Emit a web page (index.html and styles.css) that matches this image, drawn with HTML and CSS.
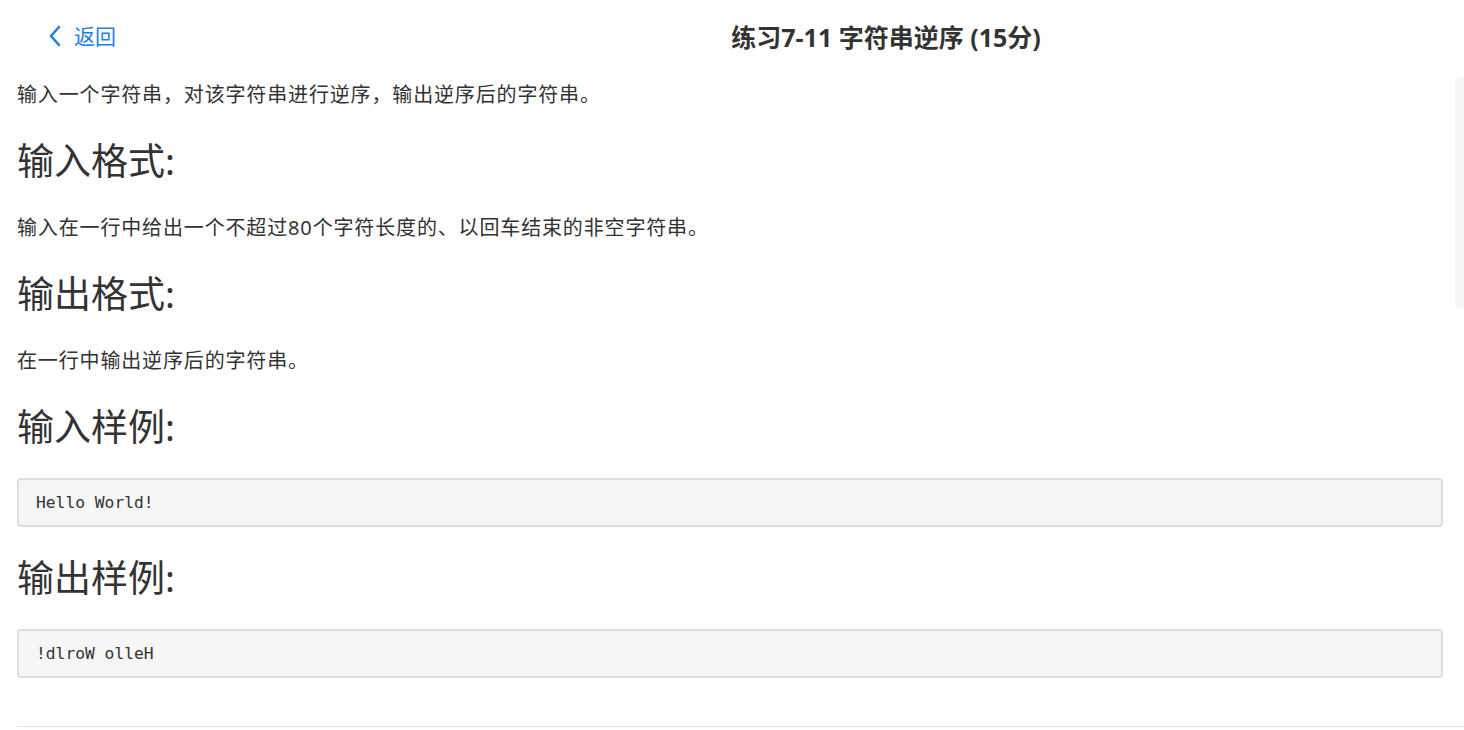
FILE: index.html
```html
<!DOCTYPE html>
<html lang="zh-CN">
<head>
<meta charset="utf-8">
<title>练习7-11 字符串逆序 (15分)</title>
<link rel="stylesheet" href="styles.css">
</head>
<body>
<div class="page">
  <header class="topbar">
    <a class="back" href="#">
      <svg class="chev" width="14" height="22" viewBox="0 0 14 22"><path d="M11 2 L3 11 L11 20" fill="none" stroke="#1f7ee8" stroke-width="2.6" stroke-linecap="round" stroke-linejoin="round"/></svg>
      <span>返回</span>
    </a>
    <h1 class="title">练习7-11 字符串逆序 (15分)</h1>
  </header>
  <main class="content">
    <p>输入一个字符串，对该字符串进行逆序，输出逆序后的字符串。</p>
    <h2>输入格式:</h2>
    <p>输入在一行中给出一个不超过80个字符长度的、以回车结束的非空字符串。</p>
    <h2>输出格式:</h2>
    <p>在一行中输出逆序后的字符串。</p>
    <h2>输入样例:</h2>
    <pre class="code">Hello World!</pre>
    <h2>输出样例:</h2>
    <pre class="code">!dlroW olleH</pre>
  </main>
  <div class="rule"></div>
  <div class="scroll-thumb"></div>
</div>
</body>
</html>
```

FILE: styles.css
```css
html, body {
  margin: 0;
  padding: 0;
  background: #fff;
}
body {
  font-family: "Noto Sans", "Noto Sans CJK SC", sans-serif;
  color: #333;
  overflow: hidden;
}
.page {
  position: relative;
  height: 730px;
}
.topbar {
  height: 71px;
  display: flex;
  align-items: center;
  padding-left: 48px;
}
.back {
  display: flex;
  align-items: center;
  gap: 12px;
  color: #1f7ee8;
  text-decoration: none;
  font-size: 21px;
  font-family: "Noto Sans CJK SC", sans-serif;
  width: 260px;
}
.back span { line-height: 1; }
.title {
  margin: 0;
  flex: 1;
  text-align: center;
  font-size: 25px;
  font-weight: 700;
  color: #333;
  font-family: "Open Sans", "Noto Sans CJK SC", sans-serif;
}
.content {
  padding: 9px 21px 0 17px;
}
.content p {
  margin: 0 0 29px;
  font-size: 20px;
  line-height: 30px;
  letter-spacing: 0.85px;
}
.content h2 {
  margin: 0 0 30px;
  font-size: 37px;
  line-height: 44px;
  font-weight: 400;
  color: #333;
}
.code {
  margin: 0 0 29px;
  background: #f6f6f6;
  border: 2px solid #dedede;
  border-radius: 4px;
  padding: 0 17px;
  height: 45px;
  line-height: 45px;
  font-family: "DejaVu Sans Mono", monospace;
  font-size: 16.3px;
  color: #333;
}
.content h2 + .code { margin-top: -1px; }
.rule {
  margin: 48px 0 0 17px;
  border-top: 1px solid #e4e4e4;
}
.scroll-thumb {
  position: absolute;
  right: 0;
  top: 77px;
  width: 9px;
  height: 232px;
  background: #f5f5f5;
  border-radius: 5px 0 0 5px;
}
```
